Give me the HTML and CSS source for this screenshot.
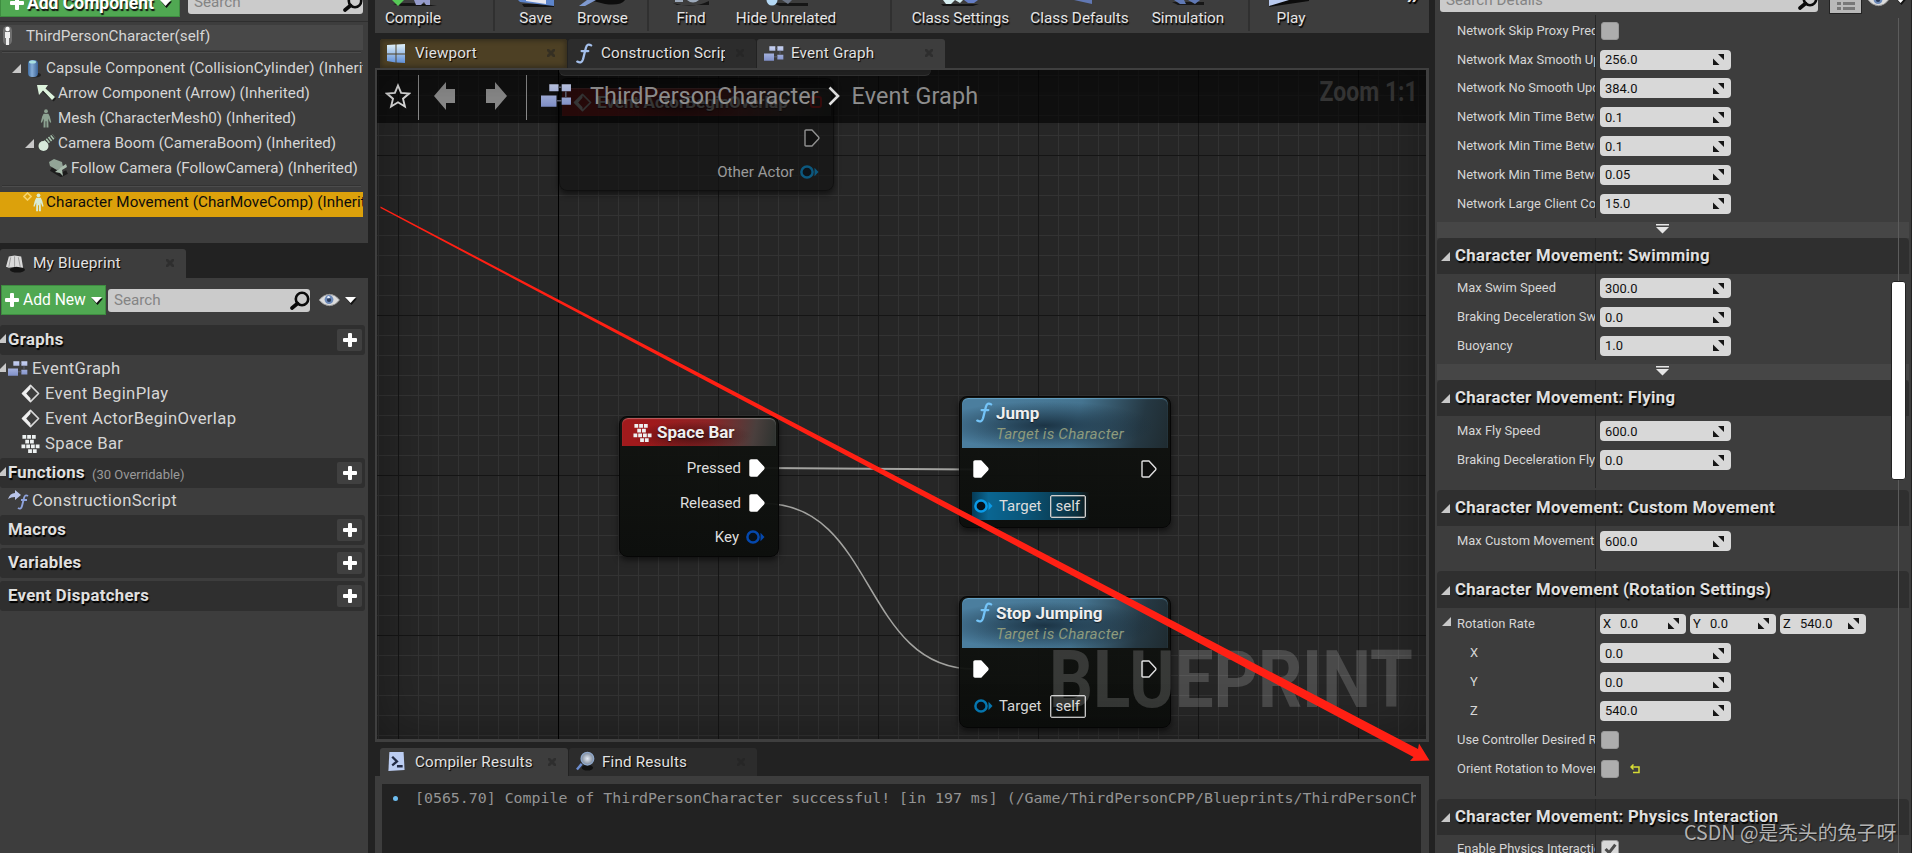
FILE: index.html
```html
<!DOCTYPE html>
<html lang="en">
<head>
<meta charset="utf-8">
<title>ThirdPersonCharacter</title>
<link rel="stylesheet" href="styles.css">
</head>
<body>
<svg class="defs" width="0" height="0">
  <defs>
    <linearGradient id="gBlue" x1="0" y1="0" x2="0" y2="1"><stop offset="0" stop-color="#c9d3f3"/><stop offset="1" stop-color="#7f8fc8"/></linearGradient>
    <linearGradient id="gPane" x1="0" y1="0" x2="0" y2="1"><stop offset="0" stop-color="#dff0f8"/><stop offset="1" stop-color="#5f8fd8"/></linearGradient>
    <linearGradient id="gCap" x1="0" y1="0" x2="1" y2="0"><stop offset="0" stop-color="#3f6da3"/><stop offset=".4" stop-color="#86add6"/><stop offset="1" stop-color="#3a6296"/></linearGradient>
    <radialGradient id="gLens"><stop offset="0" stop-color="#e4eaf4"/><stop offset="1" stop-color="#7b8797"/></radialGradient>
  </defs>
  <symbol id="plus" viewBox="0 0 14 14"><path d="M5 1q0-1 1-1h2q1 0 1 1v4h4q1 0 1 1v2q0 1-1 1H9v4q0 1-1 1H6q-1 0-1-1V9H1Q0 9 0 8V6q0-1 1-1h4z" fill="#fff"/></symbol>
  <symbol id="caret" viewBox="0 0 12 9"><path d="M1 2.500h11L6.500 9z" fill="#111"/><path d="M0 1h11L5.500 7z" fill="#fff"/></symbol>
  <symbol id="lens" viewBox="0 0 20 19"><circle cx="12" cy="8" r="6.200" fill="none" stroke="#0a0a0a" stroke-width="2.600"/><path d="M7.500 12.500L2 17" stroke="#0a0a0a" stroke-width="3.600" stroke-linecap="round"/></symbol>
  <symbol id="eye" viewBox="0 0 24 14"><path d="M1 7Q6 1 12 1t10.500 6Q18 13 12 13T1 7z" fill="#dcdcdc" stroke="#8d8d8d" stroke-width=".8"/><circle cx="11.500" cy="6.500" r="4.600" fill="#6d8ab8"/><circle cx="11.500" cy="7" r="2.200" fill="#283a5c"/><circle cx="11" cy="4" r="1.300" fill="#e9f1ff"/></symbol>
  <symbol id="tri" viewBox="0 0 9 9"><path d="M9 0v9H0z" fill="#c8c8c8"/></symbol>
  <symbol id="person" viewBox="0 0 14 20"><circle cx="7" cy="2.300" r="2"/><path d="M4.500 5h5l1.500 3 1.500 6-1.200.500-1.900-4.500.2 9.500H7.500V13h-1v6.500H4.400L4.600 10l-1.900 4.500L1.500 14 3 8z"/></symbol>
  <symbol id="graph" viewBox="0 0 30 24"><path d="M8 1h9v7H8zM20 1h9v7h-9zM20 14h9v7h-9zM0 12h15v11H0z" fill="url(#gBlue)"/><path d="M17 4h3M24 8v6M15 17h5" stroke="#5b5f70" stroke-width="1.500"/></symbol>
  <symbol id="event" viewBox="0 0 20 20"><path d="M10 1.500l8.500 8.500-8.500 8.500L1.500 10z" fill="none" stroke="#d8d8d8" stroke-width="1.700" stroke-linejoin="round"/><path d="M10 1L1 10l9 9V15L5.500 10 10 5z" fill="#f0f0f0"/></symbol>
  <symbol id="keys" viewBox="0 0 19 20"><path d="M1 1h4v4H1zM6 1h4v4H6zM11 1h4v4h-4zM4 6h4v4H4zM9 6h4v4H9zM0 11h4v4H0zM5 11h4v4H5zM10 11h4v4h-4zM15 11h4v4h-4zM7 16h4v4H7zM12 16h4v4h-4z" fill="#eef2f2"/></symbol>
  <symbol id="fn" viewBox="0 0 18 22"><path d="M16.500 2.500Q12.500 0 11 5L8 17Q6.500 22 2 19.500M6.500 8.500h7" fill="none" stroke="currentColor" stroke-width="2.400" stroke-linecap="round"/></symbol>
  <symbol id="x" viewBox="0 0 8 8"><path d="M0 0h2l2 2 2-2h2v2L6 4l2 2v2H6L4 6 2 8H0V6l2-2-2-2z" fill="#222"/></symbol>
  <symbol id="exec" viewBox="0 0 16 18"><path d="M1 2q0-1 1-1h6l6.500 7q.8 1 0 2L8 17H2q-1 0-1-1z" stroke-width="1.400" stroke-linejoin="round"/></symbol>
  <symbol id="pin" viewBox="0 0 19 14"><circle cx="7" cy="7" r="5.600" fill="#071018" stroke="currentColor" stroke-width="2.500"/><path d="M14.500 2.800L18.500 7l-4 4.200z" fill="currentColor"/></symbol>
  <symbol id="drag" viewBox="0 0 11 11"><path d="M5 0h6v6zM0 4.500L6.500 11H0z" fill="#151515"/></symbol>
  <symbol id="adv" viewBox="0 0 13 10"><path d="M0 0h13v1.500H0zM0 3h13L6.500 9.500z" fill="#e6e6e6"/></symbol>
</svg>

<div class="app">
  <!-- Components and My Blueprint -->
  <aside class="left">
    <section class="components">
      <div class="comp-bar">
        <div class="btn btn-comp"><svg class="i14"><use href="#plus"/></svg><b>Add Component</b><svg class="icaret"><use href="#caret"/></svg></div>
        <div class="search search-comp"><span>Search</span><svg class="ilens"><use href="#lens"/></svg></div>
      </div>
      <div class="tree">
        <div class="trow root"><svg class="iself" viewBox="0 0 12 20"><rect x="1" width="9" height="19" rx="4.500" fill="#8b8b8b" opacity=".6"/><circle cx="5.500" cy="3" r="2.200" fill="#fff"/><path d="M3 6h5v6H7v7H4v-7H3z" fill="#eee"/></svg><span>ThirdPersonCharacter(self)</span></div>
        <div class="rule"></div>
        <div class="trow d1"><svg class="itri"><use href="#tri"/></svg><svg class="icap" viewBox="0 0 15 19"><ellipse cx="9" cy="16" rx="6" ry="2.500" fill="#1f1f1f"/><rect x="2" y="1" width="10" height="17" rx="4" fill="url(#gCap)"/><ellipse cx="6.500" cy="3" rx="3.500" ry="1.500" fill="#a8e0e0"/></svg><span>Capsule Component (CollisionCylinder) (Inherited)</span></div>
        <div class="trow d2"><svg class="iarr" viewBox="0 0 19 18"><path d="M3 3l15 13" stroke="#1e1e1e" stroke-width="4"/><path d="M0 1h11L8.500 4.500 18 13l-3 3-9-9.500L2 11z" fill="#dcf2dc"/></svg><span>Arrow Component (Arrow) (Inherited)</span></div>
        <div class="trow d3"><svg class="iper mesh"><use href="#person"/></svg><span>Mesh (CharacterMesh0) (Inherited)</span></div>
        <div class="trow d4"><svg class="itri"><use href="#tri"/></svg><svg class="iboom" viewBox="0 0 18 18"><path d="M7 9L16 2" stroke="#a8c4ae" stroke-width="5" stroke-dasharray="1.600 1.200"/><circle cx="5.500" cy="12" r="5" fill="#d7eadb"/></svg><span>Camera Boom (CameraBoom) (Inherited)</span></div>
        <div class="trow d5"><svg class="icam" viewBox="0 0 20 18"><path d="M3 10l10 6 6-3" stroke="#1c1c1c" stroke-width="4" fill="none"/><path d="M1 3l5-3 8 3 1 5-6 3-7-4z" fill="#92a497"/><path d="M12 9l6-4 1 3-5 3 1 6-3-3-5-1z" fill="#aabdae"/></svg><span>Follow Camera (FollowCamera) (Inherited)</span></div>
        <div class="rule low"></div>
        <div class="trow sel"><svg class="ipivot" viewBox="0 0 9 9"><path d="M4.500 1L8 4.500 4.500 8 1 4.500z" fill="none" stroke="#f5d36b" stroke-width="1.600"/></svg><svg class="iper move"><use href="#person"/></svg><span>Character Movement (CharMoveComp) (Inherited)</span></div>
      </div>
    </section>
    <div class="tabs tabs-left"><div class="tab on tab-bp"><svg class="ibook" viewBox="0 0 20 19"><ellipse cx="12" cy="16" rx="8" ry="3" fill="#151515"/><path d="M3 2l6-1 7 1 2 12-7-1-8 1-3-1z" fill="#dadada"/><path d="M5 3L3 13M9 2v11M13 3l2 10" stroke="#9a9a9a"/></svg><span>My Blueprint</span><svg class="ix"><use href="#x"/></svg></div></div>
    <section class="blueprint">
      <div class="bp-bar">
        <div class="btn btn-new"><svg class="i14"><use href="#plus"/></svg><span>Add New</span><svg class="icaret"><use href="#caret"/></svg></div>
        <div class="search search-bp"><span>Search</span><svg class="ilens"><use href="#lens"/></svg></div>
        <svg class="ieye"><use href="#eye"/></svg><svg class="icaret"><use href="#caret"/></svg>
      </div>
      <div class="cat"><svg class="itri cut"><use href="#tri"/></svg><b>Graphs</b><i class="add"><svg class="i14"><use href="#plus"/></svg></i></div>
      <div class="list">
        <div class="brow"><svg class="itri cut"><use href="#tri"/></svg><svg class="igraph"><use href="#graph"/></svg><span>EventGraph</span></div>
        <div class="brow sub"><svg class="i20"><use href="#event"/></svg><span>Event BeginPlay</span></div>
        <div class="brow sub"><svg class="i20"><use href="#event"/></svg><span>Event ActorBeginOverlap</span></div>
        <div class="brow sub"><svg class="i20"><use href="#keys"/></svg><span>Space Bar</span></div>
      </div>
      <div class="cat"><svg class="itri cut"><use href="#tri"/></svg><b>Functions</b><small>(30 Overridable)</small><i class="add"><svg class="i14"><use href="#plus"/></svg></i></div>
      <div class="brow fnrow"><svg class="icons" viewBox="0 0 21 20"><path d="M0 9Q2 3 7 3V0l6 5-6 5V7Q3 7 0 9z" fill="#b9c5ea"/><path d="M20 6q-3-2-4 2l-2 8q-1 4-4 2M13 10h6" stroke="#8ea3dc" stroke-width="1.900" fill="none"/></svg><span>ConstructionScript</span></div>
      <div class="cat gap"><b>Macros</b><i class="add"><svg class="i14"><use href="#plus"/></svg></i></div>
      <div class="cat gap"><b>Variables</b><i class="add"><svg class="i14"><use href="#plus"/></svg></i></div>
      <div class="cat"><b>Event Dispatchers</b><i class="add"><svg class="i14"><use href="#plus"/></svg></i></div>
    </section>
  </aside>

  <!-- Toolbar, graph and results -->
  <main class="center">
    <nav class="toolbar">
      <div class="tool t1"><svg viewBox="0 0 52 7"><path d="M6 4Q26 1 50 6H14z" fill="#141414"/><path d="M5 0h12l-6 6z" fill="#57c957"/><path d="M27 0h16v5h-4l-2-3-3 3h-5z" fill="#959bcb"/></svg><span>Compile</span></div>
      <div class="tool t2 div"><svg viewBox="0 0 52 7"><path d="M12 4h32v3H14z" fill="#141414"/><path d="M8 0h36v6L10 2z" fill="#5d85cc"/><path d="M16 0h20v4L16 1z" fill="#e8e8f0"/></svg><span>Save</span></div>
      <div class="tool t3"><svg viewBox="0 0 52 7"><path d="M12 0h36q-4 6-20 4z" fill="#0d0d0d"/><path d="M10 0h9L8 6H2z" fill="#7f9ad0"/></svg><span>Browse</span></div>
      <div class="tool t4 div"><svg viewBox="0 0 52 7"><path d="M8 3q20 6 36-2v4H12z" fill="#161616"/><path d="M10 0h8v2h-8zM22 0h12q-6 5-12 0z" fill="#9daabb"/></svg><span>Find</span></div>
      <div class="tool t5"><svg viewBox="0 0 52 7"><path d="M12 3h36v3H20z" fill="#161616"/><circle cx="12" cy="0" r="5.500" fill="#b5d9f5"/><path d="M22 0h10l-4 4z" fill="#6d7687"/></svg><span>Hide Unrelated</span></div>
      <div class="tool t6 div"><svg viewBox="0 0 52 7"><path d="M6 4h38l-6 2H8z" fill="#141414"/><path d="M8 0h12l-4 4h-5zM20 0h8l-3 3z" fill="#d5edf0"/><path d="M29 0h14l-4 3h-6z" fill="#657ec5"/></svg><span>Class Settings</span></div>
      <div class="tool t7"><svg viewBox="0 0 52 7"><path d="M20 0h18v4z" fill="#6178b3"/></svg><span>Class Defaults</span></div>
      <div class="tool t8"><svg viewBox="0 0 52 7"><path d="M10 2h32v3H16z" fill="#171717"/><path d="M12 0h10l2 4h-6zM26 0h12l-5 4z" fill="#6079b5"/></svg><span>Simulation</span></div>
      <div class="tool t9 div"><svg viewBox="0 0 52 7"><path d="M4 7L44 1V0H10z" fill="#0c0c0c"/><path d="M4 0h20L4 6z" fill="#b9caef"/></svg><span>Play</span></div>
      <b class="more">»</b>
    </nav>
    <div class="tabs">
      <div class="tab view"><svg class="i18" viewBox="0 0 19 20"><path d="M0 1l9-.500V10H0zM10 .5L19 0v10h-9zM0 11h9v8.500L0 18zM10 11h9v9l-9-.500z" fill="url(#gPane)"/></svg><span>Viewport</span><svg class="ix"><use href="#x"/></svg></div>
      <div class="tab"><svg class="ifn"><use href="#fn"/></svg><span class="clip">Construction Script</span><svg class="ix"><use href="#x"/></svg></div>
      <div class="tab on"><svg class="igraph"><use href="#graph"/></svg><span class="near">Event Graph</span><svg class="ix"><use href="#x"/></svg></div>
    </div>
    <section class="graph">
      <div class="bubble"></div>
      <div class="node ghost">
        <div class="head red"><svg class="i20"><use href="#event"/></svg><b>Event ActorBeginOverlap</b><i class="delegate"></i></div>
        <svg class="pin-exec g1 hollow"><use href="#exec"/></svg>
        <div class="out g2"><span>Other Actor</span><svg class="ipin"><use href="#pin"/></svg></div>
      </div>
      <svg class="wires" viewBox="377 70 1049 669"><path d="M764 468L974 469.500" stroke-width="2"/><path d="M764 503.500C876 503.500 862 669 974 669" stroke-width="1.500"/></svg>
      <div class="node space">
        <div class="head red"><svg class="i20"><use href="#keys"/></svg><b>Space Bar</b></div>
        <div class="outs">
          <div class="out"><span>Pressed</span><svg class="pin-exec solid"><use href="#exec"/></svg></div>
          <div class="out"><span>Released</span><svg class="pin-exec solid"><use href="#exec"/></svg></div>
          <div class="out key"><span>Key</span><svg class="ipin"><use href="#pin"/></svg></div>
        </div>
      </div>
      <div class="node func jump">
        <div class="head blue"><svg class="ifn"><use href="#fn"/></svg><div><b>Jump</b><em>Target is Character</em></div></div>
        <div class="execs"><svg class="pin-exec solid"><use href="#exec"/></svg><svg class="pin-exec hollow"><use href="#exec"/></svg></div>
        <div class="target hot"><svg class="ipin"><use href="#pin"/></svg><span>Target</span><i>self</i></div>
      </div>
      <div class="node func stop">
        <div class="head blue"><svg class="ifn"><use href="#fn"/></svg><div><b>Stop Jumping</b><em>Target is Character</em></div></div>
        <div class="execs"><svg class="pin-exec solid"><use href="#exec"/></svg><svg class="pin-exec hollow"><use href="#exec"/></svg></div>
        <div class="target"><svg class="ipin"><use href="#pin"/></svg><span>Target</span><i>self</i></div>
      </div>
      <div class="mark">BLUEPRINT</div>
      <div class="crumbs">
        <svg class="istar" viewBox="0 0 26 26"><path d="M13 2.500l3.100 7.400 8 .6-6.100 5.200 1.900 7.800-6.900-4.200-6.900 4.200L8 15.700l-6.100-5.200 8-.6z" fill="none" stroke="#e4e4e4" stroke-width="1.900"/></svg>
        <i class="bar"></i>
        <svg class="inav" viewBox="0 0 22 30"><path d="M0 15L12 1v7h9v14h-9v7z" fill="#8a8a8a"/></svg>
        <svg class="inav fwd" viewBox="0 0 22 30"><path d="M22 15L10 1v7H1v14h9v7z" fill="#8a8a8a"/></svg>
        <i class="bar"></i>
        <svg class="ibig"><use href="#graph"/></svg>
        <span class="cr">ThirdPersonCharacter</span>
        <svg class="ichev" viewBox="0 0 12 20"><path d="M1.500 1.500L10 10l-8.500 8.500" fill="none" stroke="#e8e8e8" stroke-width="2.600"/></svg>
        <span class="cr cr2">Event Graph</span>
        <b class="zoom">Zoom 1:1</b>
      </div>
      <div class="shade"></div>
    </section>
    <div class="tabs tabs-low">
      <div class="tab on"><svg class="i18" viewBox="0 0 18 20"><path d="M2 0h15l1 19-17 1z" fill="#bccdf2"/><path d="M5 5l5 5-5 4M10 15h6" stroke="#222b45" stroke-width="2.400" fill="none"/></svg><span>Compiler Results</span><svg class="ix"><use href="#x"/></svg></div>
      <div class="tab"><svg class="ifind" viewBox="0 0 20 21"><ellipse cx="12" cy="17" rx="6" ry="3" fill="#111"/><path d="M6 13L1 19" stroke="#6c8dd0" stroke-width="2.500"/><circle cx="12" cy="7.500" r="6.600" fill="url(#gLens)" stroke="#8ea6c8" stroke-width="1.500"/></svg><span class="near">Find Results</span><svg class="ix"><use href="#x"/></svg></div>
    </div>
    <section class="results"><div class="log"><i></i><span>[0565.70] Compile of ThirdPersonCharacter successful! [in 197 ms] (/Game/ThirdPersonCPP/Blueprints/ThirdPersonCharacter)</span></div></section>
  </main>

  <!-- Details -->
  <aside class="details">
    <div class="d-bar"><div class="search search-d"><span>Search Details</span><svg class="ilens"><use href="#lens"/></svg></div><div class="grid-btn"><svg viewBox="0 0 18 18"><path d="M0 2h4v3H0zM6 2h12v3H6zM0 7h4v3H0zM6 7h12v3H6zM0 12h4v3H0zM6 12h12v3H6z" fill="#777"/></svg></div><svg class="ieye"><use href="#eye"/></svg><svg class="icaret"><use href="#caret"/></svg></div>
    <div class="props p-net">
      <div class="prop"><label>Network Skip Proxy Prediction</label><i class="check"></i></div>
      <div class="prop"><label>Network Max Smooth Update Distance</label><div class="num">256.0<svg><use href="#drag"/></svg></div></div>
      <div class="prop"><label>Network No Smooth Update Distance</label><div class="num">384.0<svg><use href="#drag"/></svg></div></div>
      <div class="prop"><label>Network Min Time Between</label><div class="num">0.1<svg><use href="#drag"/></svg></div></div>
      <div class="prop"><label>Network Min Time Between</label><div class="num">0.1<svg><use href="#drag"/></svg></div></div>
      <div class="prop"><label>Network Min Time Between</label><div class="num">0.05<svg><use href="#drag"/></svg></div></div>
      <div class="prop"><label>Network Large Client Correction</label><div class="num">15.0<svg><use href="#drag"/></svg></div></div>
    </div>
    <div class="adv"><svg><use href="#adv"/></svg></div>
    <h3><svg class="itri"><use href="#tri"/></svg>Character Movement: Swimming</h3>
    <div class="props p-swim">
      <div class="prop"><label>Max Swim Speed</label><div class="num">300.0<svg><use href="#drag"/></svg></div></div>
      <div class="prop"><label>Braking Deceleration Swimming</label><div class="num">0.0<svg><use href="#drag"/></svg></div></div>
      <div class="prop"><label>Buoyancy</label><div class="num">1.0<svg><use href="#drag"/></svg></div></div>
    </div>
    <div class="adv"><svg><use href="#adv"/></svg></div>
    <h3><svg class="itri"><use href="#tri"/></svg>Character Movement: Flying</h3>
    <div class="props p-fly">
      <div class="prop"><label>Max Fly Speed</label><div class="num">600.0<svg><use href="#drag"/></svg></div></div>
      <div class="prop"><label>Braking Deceleration Flying</label><div class="num">0.0<svg><use href="#drag"/></svg></div></div>
    </div>
    <h3><svg class="itri"><use href="#tri"/></svg>Character Movement: Custom Movement</h3>
    <div class="props p-custom">
      <div class="prop"><label>Max Custom Movement Speed</label><div class="num">600.0<svg><use href="#drag"/></svg></div></div>
    </div>
    <h3 class="tall"><svg class="itri"><use href="#tri"/></svg>Character Movement (Rotation Settings)</h3>
    <div class="props p-rot">
      <div class="prop vec"><label><svg class="itri"><use href="#tri"/></svg>Rotation Rate</label><div class="num v"><u>X</u>0.0<svg><use href="#drag"/></svg></div><div class="num v"><u>Y</u>0.0<svg><use href="#drag"/></svg></div><div class="num v"><u>Z</u>540.0<svg><use href="#drag"/></svg></div></div>
      <div class="prop in"><label>X</label><div class="num">0.0<svg><use href="#drag"/></svg></div></div>
      <div class="prop in"><label>Y</label><div class="num">0.0<svg><use href="#drag"/></svg></div></div>
      <div class="prop in"><label>Z</label><div class="num">540.0<svg><use href="#drag"/></svg></div></div>
      <div class="prop"><label>Use Controller Desired Rotation</label><i class="check"></i></div>
      <div class="prop"><label>Orient Rotation to Movement</label><i class="check"></i><svg class="reset" viewBox="0 0 11 10"><path d="M1 3h8v5.500H3M3.500.500L1 3l2.500 2.500" fill="none" stroke="#d6dc35" stroke-width="1.500"/></svg></div>
    </div>
    <h3><svg class="itri"><use href="#tri"/></svg>Character Movement: Physics Interaction</h3>
    <div class="props p-phys"><div class="prop"><label>Enable Physics Interaction</label><i class="check ticked"><svg viewBox="0 0 18 18"><path d="M4 9l4 4 7-9" fill="none" stroke="#4c4c4c" stroke-width="3.400"/></svg></i></div></div>
    <div class="scroll"><i></i></div>
  </aside>
</div>
<svg class="pointer" viewBox="0 0 1912 853"><path d="M380.500 206.500L1418 749l1-5.500 10.500 17-19.500.500 3.500-4L380.500 208z" fill="#ff2014"/></svg>
<div class="credit">CSDN @是秃头的兔子呀</div>
</body>
</html>
```
FILE: styles.css
```css
* { box-sizing: border-box; }
html, body { margin: 0; height: 853px; overflow: hidden; background: #222; }
body { position: relative; font-family: Roboto, "Noto Sans", sans-serif; font-size: 15.2px; color: #d6d6d6; white-space: nowrap; }
svg { display: block; flex: none; }
.defs { position: absolute; }
i, em, u { font-style: normal; text-decoration: none; }
.app { display: grid; grid-template-columns: 368px 1054px 475px; column-gap: 7px; height: 853px; }

/* shared controls */
.i14 { width: 14px; height: 14px; }
.i18 { width: 18px; height: 19px; }
.i20 { width: 19px; height: 19px; }
.icaret { width: 12px; height: 9px; }
.ilens { width: 20px; height: 19px; }
.ieye { width: 23px; height: 14px; }
.itri { width: 9px; height: 9px; }
.ix { width: 8px; height: 8px; opacity: .55; }
.igraph { width: 20px; height: 17px; }
.ifn { width: 18px; height: 21px; color: #a5c0ec; }
.btn { display: flex; align-items: center; background: #50a852; border: 1px solid #3e8c40; color: #fff; }
.btn b { text-shadow: 1px 2px 1px #111; }
.search { display: flex; align-items: center; justify-content: space-between; background: #cbcbcb; color: #848484; border-radius: 3px; padding: 0 0 0 6px; }

/* left column */
.left { display: flex; flex-direction: column; height: 853px; overflow: hidden; }
.components { height: 243px; background: #3d3d3d; overflow: hidden; }
.comp-bar { display: flex; gap: 8px; height: 22px; align-items: flex-end; padding-bottom: 4px; background: #3d3d3d; border-bottom: 1px solid #2e2e2e; overflow: hidden; }
.btn-comp { flex: none; width: 180px; height: 30px; padding: 2px 0 0 9px; gap: 3px; font-size: 17.500px; }
.btn-comp .icaret { margin-left: 3px; }
.search-comp { width: 175px; height: 24px; margin-bottom: 3px; }
.tree { width: 363px; overflow: hidden; padding-top: 3px; letter-spacing: .03px; }
.trow { display: flex; align-items: center; height: 25px; padding-bottom: 4px; overflow: hidden; }
.root { background: #484848; padding-left: 2px; }
.iself { width: 12px; height: 20px; margin-right: 12px; }
.rule { height: 2px; margin: 1px 2px 4.500px; background: #4c4c4c; border-top: 1px solid #333; }
.rule.low { margin: 2px 2px 5px; }
.d1 { padding-left: 12px; letter-spacing: .12px; } .d1 .itri { margin-right: 5px; } .icap { width: 15px; height: 19px; margin-right: 5px; }
.d2 { padding-left: 37px; } .iarr { width: 19px; height: 18px; margin-right: 2px; }
.d3 { padding-left: 39px; } .iper { width: 14px; height: 19px; } .mesh { fill: #8da392; margin-right: 5px; }
.d4 { padding-left: 25px; } .d4 .itri { margin-right: 4px; } .iboom { width: 18px; height: 18px; margin-right: 2px; }
.d5 { padding-left: 48px; } .icam { width: 20px; height: 18px; margin-right: 3px; }
.sel { background: #dca10b; color: #0c0c0c; padding-left: 23px; letter-spacing: .08px; } .ipivot { width: 9px; height: 9px; margin-bottom: 11px; }
.move { fill: #d8ecd6; width: 13px; margin-right: 1px; }

.tabs { display: flex; gap: 1px; height: 29px; margin: 6px 0 0 5px; }
.tab { display: flex; align-items: center; width: 188px; padding: 0 12px 1px 7px; background: #2c2c2c; color: #e2e2e2; text-shadow: 1px 1px 1px #000; border-radius: 3px 3px 0 0; letter-spacing: .18px; }
.tab.view { width: 187px; }
.tab.on { background: #3d3d3d; }
.tab .ix { margin-left: auto; }
.tab span { margin-left: 10px; }
.tab span.near { margin-left: 7px; }
.tabs-left { margin-left: 0; }
.tab-bp { width: 186px; padding: 0 12px 1px 6px; font-size: 15.400px; }
.tab-bp span { margin-left: 8px; }
.ibook { width: 19px; height: 19px; }
.blueprint { flex: 1; background: #3d3d3d; }
.bp-bar { display: flex; align-items: center; height: 47px; padding: 0 0 3px 1px; gap: 2px; }
.btn-new { width: 105px; height: 30px; padding: 0 4px 1px 3px; gap: 4px; font-size: 15.600px; }
.btn-new .icaret { margin: 2px 0 0 1px; }
.search-bp { width: 202px; height: 23px; }
.bp-bar .ieye { margin: 0 2px 0 6px; }
.cat { display: flex; align-items: center; width: 365px; height: 30px; padding: 0 3px 1px 8px; background: #2f2f2f; border-radius: 3px; font-size: 16.700px; letter-spacing: .35px; color: #e0e0e0; text-shadow: 1px 2px 1px #000; }
.cat small { font-size: 13px; letter-spacing: 0; color: #9a9a9a; margin: 4px 0 0 7px; text-shadow: none; }
.cut { margin: 0 2px 2px -11px; }
.cat.gap { margin-bottom: 3px; }
.add { display: flex; align-items: center; justify-content: center; width: 25px; height: 22px; margin-left: auto; background: #404040; border-radius: 2px; }
.list { height: 103px; padding-top: 1px; }
.brow { display: flex; align-items: center; height: 25px; padding-left: 8px; gap: 4px; font-size: 16.700px; letter-spacing: .35px; }
.brow .cut { margin-right: -2px; }
.sub { padding-left: 21px; gap: 5px; }
.icons { width: 21px; height: 20px; }
.fnrow { height: 27px; padding-bottom: 3px; gap: 3px; }

/* toolbar */
.center { display: flex; flex-direction: column; min-width: 0; }
.toolbar { display: flex; height: 33px; background: #3d3d3d; color: #e6e6e6; text-shadow: 1px 2px 1px #000; font-size: 15.300px; }
.tool { display: flex; flex-direction: column; align-items: center; height: 31px; overflow: hidden; }
.tool svg { width: 52px; height: 7px; }
.tool span { line-height: 23px; }
.div { border-left: 2px solid #303030; }
.t1 { width: 118px; padding-right: 42px; } .t2 { width: 77px; padding-left: 6px; } .t3 { width: 77px; padding-right: 12px; }
.t4 { width: 80px; padding-left: 6px; } .t5 { width: 163px; padding-right: 45px; }
.t6 { width: 133px; padding-left: 6px; } .t7 { width: 113px; } .t8 { width: 112px; padding-right: 8px; } .t9 { width: 84px; }
.more { margin: -18px 10px 0 auto; font-size: 25px; line-height: 28px; }
.view { background: #4d4024; box-shadow: inset 0 0 4px 2px #362e1e; }
.clip { width: 124px; overflow: hidden; padding-bottom: 2px; }
.tab .clip { margin: 2px 0 0 8px; }

/* graph canvas */
.graph {
  position: relative; height: 674px; border: 2px solid #3f3f3f; border-right-width: 3px; border-bottom-width: 3px; overflow: hidden;
  background-color: #262626;
  background-image:
    linear-gradient(#000, #000),
    linear-gradient(90deg, #151515 1px, transparent 1px),
    linear-gradient(#151515 1px, transparent 1px),
    linear-gradient(90deg, #333 1px, transparent 1px),
    linear-gradient(#333 1px, transparent 1px);
  background-size: 1px 100%, 160px 160px, 160px 160px, 20px 20px, 20px 20px;
  background-position: 181px 0, 21px 85px, 21px 85px, 1px 5px, 1px 5px;
  background-repeat: no-repeat, repeat, repeat, repeat, repeat;
}
.shade { position: absolute; inset: 0; box-shadow: inset 0 0 50px rgba(0,0,0,.35); pointer-events: none; }
.wires { position: absolute; left: 0; top: 0; width: 1049px; height: 669px; fill: none; stroke: #a3a3a0; }
.node { position: absolute; padding: 1px 2px; border-radius: 8px; background: linear-gradient(rgba(17,19,16,.94), rgba(12,14,12,.96)); border: 1px solid #060606; box-shadow: 0 3px 6px rgba(0,0,0,.55); color: #dedede; font-size: 15px; }
.head { display: flex; border-radius: 6px 6px 0 0; color: #efefef; }
.head b { font-size: 17px; line-height: 20px; text-shadow: 0 1px 1px rgba(0,0,0,.6); }
.red { align-items: center; height: 28px; padding-left: 11px; gap: 5px; background: radial-gradient(ellipse 60px 15px at 45% 65%, rgba(40,10,10,.65), transparent), linear-gradient(100deg, #a01a1c 20%, #8c2426 55%, #4a3f3d 85%, #2d322f); box-shadow: inset 0 1px 1px rgba(255,255,255,.3); }
.blue { height: 50px; padding: 5px 0 0 13px; gap: 3px; background: radial-gradient(ellipse 110px 24px at 40% 55%, rgba(20,40,55,.85), transparent), linear-gradient(105deg, #4b7e9e 10%, #457490 55%, #253843 85%, #1f2b30); box-shadow: inset 0 1px 1px rgba(130,200,240,.5); }
.blue b, .blue em { display: block; }
.blue em { font-style: italic; font-size: 15.200px; letter-spacing: .2px; line-height: 23px; color: #8d9a7c; }
.head .ifn { color: #74c4f8; }
.blue .ifn { margin-top: -1px; }
.pin-exec { width: 16px; height: 18px; }
.solid { fill: #fff; stroke: #fff; }
.hollow { fill: #0c0d0c; stroke: #e0e0e0; }
.ipin { width: 19px; height: 14px; color: #067ab5; }
.space { left: 242px; top: 346px; width: 160px; height: 141px; }
.outs { display: grid; grid-template-rows: 35px 35px 34px; padding: 4px 11px 0 0; }
.out { display: flex; align-items: center; justify-content: flex-end; gap: 8px; }
.key .ipin { color: #0548ad; } .key { gap: 7px; }
.func { width: 212px; height: 132px; }
.jump { left: 582px; top: 326px; } .stop { left: 582px; top: 526px; }
.execs { display: flex; justify-content: space-between; padding: 12px 11px 0 11px; }
.target { display: flex; align-items: center; height: 28px; width: 117px; margin: 14px 0 0 10px; padding-left: 2px; }
.target span { margin: 0 8px 0 6px; }
.target i { height: 23px; line-height: 20px; padding: 0 5px; border: 1px solid #cfcfcf; border-radius: 2px; box-shadow: inset 0 0 0 .5px #999; }
.hot { background: linear-gradient(90deg, #063a55, #0a6692 14%, #0a567a 45%, #0b303f 90%, #101312); }
.hot .ipin { color: #0a9be8; }
.ghost { left: 182px; top: 8px; width: 275px; height: 113px; background: rgba(18,18,18,.62); border-color: rgba(0,0,0,.35); }
.ghost .red { height: 28px; margin-top: 8px; opacity: .5; }
.delegate { width: 12px; height: 12px; border: 2px solid #e22; border-radius: 3px; margin: 0 9px 0 auto; }
.g1 { margin: 13px 0 0 242px; opacity: .6; }
.g2 { margin: 16px 12px 0 0; opacity: .65; gap: 6px; letter-spacing: .05px; }
.bubble { position: absolute; left: 182px; top: 0; width: 372px; height: 6px; background: #5c5c5c; border-radius: 0 0 6px 6px; border-bottom: 1px solid #858585; }
.mark { position: absolute; left: 672px; top: 563px; font-size: 80px; font-weight: 700; line-height: 94px; color: rgba(255,255,255,.17); transform: scaleX(.862); transform-origin: 0 0; }
.crumbs { position: absolute; left: 0; top: 0; width: 100%; height: 53px; display: flex; align-items: center; padding: 0 8px 2px 8px; background: rgba(0,0,0,.58); color: #949494; font-size: 23.400px; letter-spacing: .03px; }
.istar { width: 26px; height: 26px; }
.bar { width: 1px; height: 45px; background: #8a8a8a; margin: 4px 15px 0 7px; }
.inav { width: 22px; height: 30px; margin-right: 29px; }
.inav.fwd { margin-right: 19px; } .fwd + .bar { margin: 4px 14px 0 0; }
.ibig { width: 31px; height: 25px; }
.cr { margin-left: 18px; }
.ichev { width: 12px; height: 20px; margin-left: 9px; }
.cr2 { margin-left: 12px; letter-spacing: .15px; }
.zoom { margin-left: auto; font-size: 28px; color: #373737; transform: scaleX(.82); transform-origin: 100% 50%; margin-top: -8px; }

/* results */
.tabs-low { height: 28px; }
.i18 { margin-left: 0; }
.ifind { width: 19px; height: 21px; }
.results { flex: 1; background: #3d3d3d; padding: 8px 8px 0 7px; overflow: hidden; }
.log { display: flex; align-items: center; height: 69px; padding: 0 5px 41px 11px; background: #222; overflow: hidden; font-family: "DejaVu Sans Mono", monospace; font-size: 14.900px; color: #949494; }
.log i { flex: none; width: 5px; height: 5px; margin-right: 17px; border-radius: 50%; background: #6ebdf0; }
.log span { overflow: hidden; }

/* details */
.details { position: relative; margin-left: -1px; height: 853px; overflow: hidden; background: #3d3d3d; padding: 0 2px; width: 476px; font-size: 12.900px; }
.d-bar { display: flex; align-items: flex-end; height: 15px; padding-left: 3px; }
.search-d { flex: none; width: 378px; height: 24px; margin-bottom: 3px; font-size: 15.200px; }
.grid-btn { flex: none; width: 33px; height: 24px; margin: 0 5px 1px 11px; padding: 5px 7px; background: #b9b9b9; border: 1px solid #222; }
.grid-btn svg { width: 18px; height: 18px; margin-top: -1px; }
.d-bar .ieye { margin-bottom: 8px; } .d-bar .icaret { margin: 0 0 10px 5px; }
.props { background: linear-gradient(90deg, transparent 158px, #272727 158px, #272727 159px, transparent 159px); }
.p-net { height: 203px; padding-top: 1.500px; margin-bottom: 4px; }
.p-swim { height: 86px; margin-bottom: 4px; }
.p-fly { height: 72px; padding-top: 1px; margin-bottom: 2px; }
.p-custom { height: 43px; padding-top: 1px; margin-bottom: 2px; }
.p-rot { height: 188px; margin-bottom: 3px; }
.p-phys { padding-top: 0; height: 30px; }
.prop { display: flex; align-items: center; height: 28.800px; padding-left: 20px; }
.prop label { flex: none; width: 138px; margin-right: 5px; overflow: hidden; line-height: 20px; letter-spacing: .02px; }
.num { display: flex; align-items: center; width: 131px; height: 20px; padding: 0 7px 0 5px; background: #d8d8d8; color: #101010; border-radius: 4px; }
.num svg { width: 11px; height: 11px; margin-left: auto; }
.check { width: 18px; height: 18px; margin-left: 1px; background: #adadad; border: 1px solid #999; border-radius: 3px; }
.ticked { background: #d8d8d8; }
.reset { width: 11px; height: 10px; margin-left: 11px; }
.vec { height: 31px; padding-left: 5px; }
.vec label { display: flex; align-items: center; width: 153px; } .vec .itri { margin: 0 6px 4px 0; }
.v { width: 86px; margin-right: 4px; padding-left: 3px; } .v u { width: 17px; }
.in label { padding-left: 13px; }
.adv { display: flex; justify-content: center; height: 16px; padding: 2px 22px 0 0; background: #464646; }
.adv svg { width: 13px; height: 10px; }
h3 { display: flex; align-items: center; gap: 5px; height: 36px; margin: 0; padding: 0 0 1px 4px; font-size: 16.700px; letter-spacing: .34px; color: #e0e0e0; text-shadow: 1px 2px 1px #000; background: linear-gradient(90deg, #2f2f2f 158px, #262626 158px, #262626 159px, #2f2f2f 159px); border-radius: 4px 4px 0 0; }
h3 .itri { margin-top: 2px; }
h3.tall { height: 37px; }
.scroll { position: absolute; left: 463px; top: 18px; width: 1px; height: 835px; background: #5c5c5c; }
.scroll i { position: absolute; left: -7px; top: 263px; width: 15px; height: 199px; background: #fff; border: 1px solid #222; border-radius: 3px; }

/* overlays */
.pointer { position: absolute; left: 0; top: 0; width: 1912px; height: 853px; }
.credit { position: absolute; left: 1684px; top: 817px; font: 400 19.700px/30px "Noto Sans CJK SC", sans-serif; color: rgba(205,205,205,.85); text-shadow: 1px 1px 1px rgba(0,0,0,.5); }
```
